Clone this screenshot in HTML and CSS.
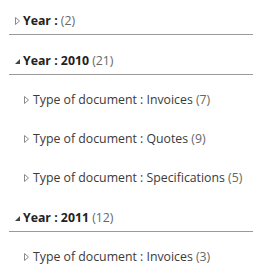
FILE: index.html
```html
<!DOCTYPE html>
<html>
<head>
<meta charset="utf-8">
<link rel="stylesheet" href="styles.css">
</head>
<body>
<div class="tree">
  <div class="header">
    <svg class="tri" width="5" height="8" viewBox="0 0 5 8"><path d="M0.5 0.5 L4.5 4 L0.5 7.5 Z" fill="none" stroke="#8a8a8a" stroke-width="1"/></svg>
    <span class="label">Year :&nbsp;</span><span class="count">(2)</span>
  </div>
  <div class="header">
    <svg class="tri open" width="5" height="8" viewBox="0 0 5 8"><path d="M5 2 L5 7 L0 7 Z" fill="#444"/></svg>
    <span class="label">Year : 2010&nbsp;</span><span class="count">(21)</span>
  </div>
  <div class="sub">
    <svg class="tri" width="5" height="8" viewBox="0 0 5 8"><path d="M0.5 0.5 L4.5 4 L0.5 7.5 Z" fill="none" stroke="#8a8a8a" stroke-width="1"/></svg>
    <span class="text">Type of document : Invoices&nbsp;</span><span class="count">(7)</span>
  </div>
  <div class="sub">
    <svg class="tri" width="5" height="8" viewBox="0 0 5 8"><path d="M0.5 0.5 L4.5 4 L0.5 7.5 Z" fill="none" stroke="#8a8a8a" stroke-width="1"/></svg>
    <span class="text">Type of document : Quotes&nbsp;</span><span class="count">(9)</span>
  </div>
  <div class="sub">
    <svg class="tri" width="5" height="8" viewBox="0 0 5 8"><path d="M0.5 0.5 L4.5 4 L0.5 7.5 Z" fill="none" stroke="#8a8a8a" stroke-width="1"/></svg>
    <span class="text">Type of document : Specifications&nbsp;</span><span class="count">(5)</span>
  </div>
  <div class="header">
    <svg class="tri open" width="5" height="8" viewBox="0 0 5 8"><path d="M5 2 L5 7 L0 7 Z" fill="#444"/></svg>
    <span class="label">Year : 2011&nbsp;</span><span class="count">(12)</span>
  </div>
  <div class="sub">
    <svg class="tri" width="5" height="8" viewBox="0 0 5 8"><path d="M0.5 0.5 L4.5 4 L0.5 7.5 Z" fill="none" stroke="#8a8a8a" stroke-width="1"/></svg>
    <span class="text">Type of document : Invoices&nbsp;</span><span class="count">(3)</span>
  </div>
</div>
</body>
</html>
```
FILE: styles.css
```css
html, body {
  margin: 0;
  padding: 0;
  background: #fff;
}
body {
  font-family: "Open Sans", "Noto Sans", sans-serif;
  font-size: 12.3px;
  color: #333;
  width: 253px;
  overflow: hidden;
}
.tree {
  display: flex;
  flex-direction: column;
}
.header {
  display: flex;
  align-items: center;
  margin-left: 9px;
  margin-bottom: 5px;
  padding: 13px 0 5px 6px;
  line-height: 16px;
  height: 16px;
  border-bottom: 1px solid #9a9a9a;
  white-space: nowrap;
}
.sub {
  display: flex;
  align-items: center;
  height: 39px;
  line-height: 16px;
  padding-left: 24px;
  white-space: nowrap;
}
.tri {
  flex: none;
  margin-right: 3px;
}
.sub .tri {
  margin-right: 4px;
}
.label {
  font-weight: bold;
  color: #222;
}
.count {
  color: #666;
}
.text {
  color: #3a3a3a;
}
```
